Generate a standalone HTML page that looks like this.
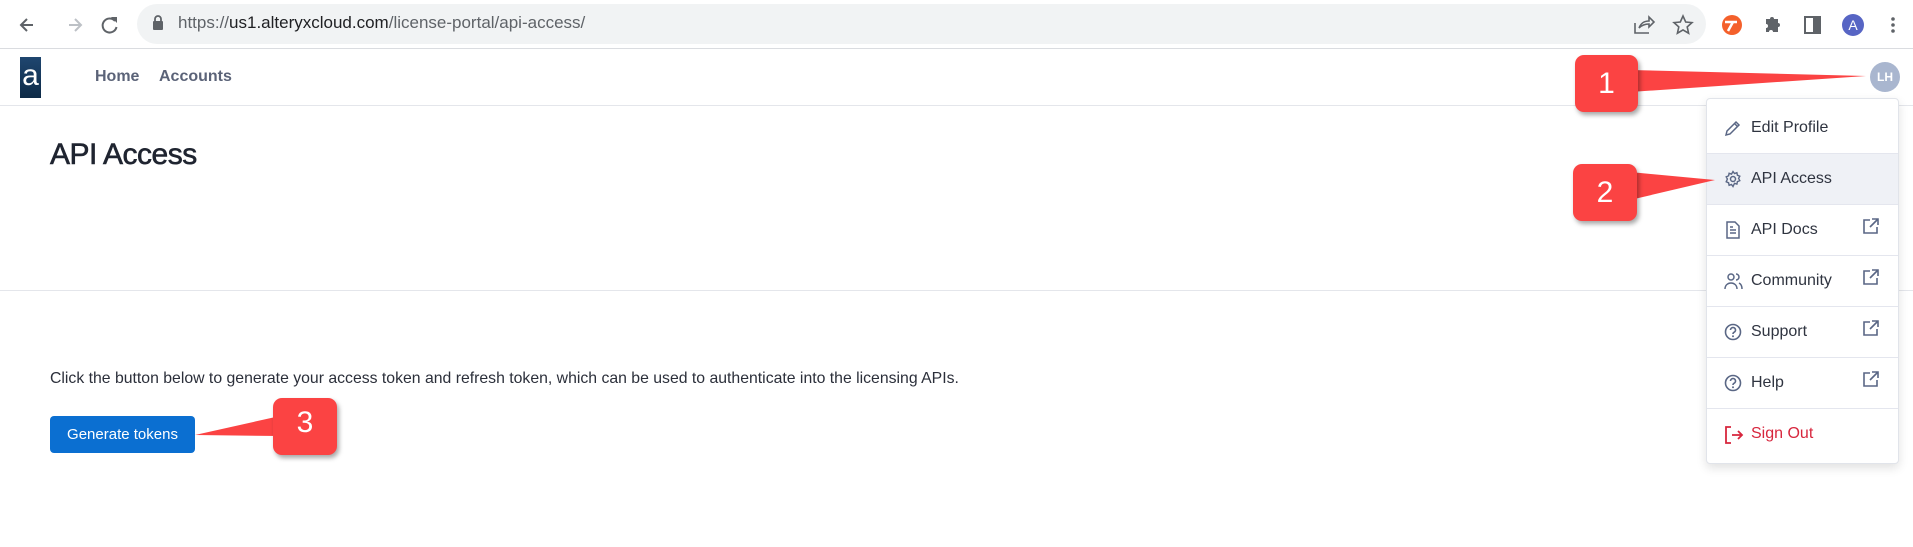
<!DOCTYPE html>
<html><head><meta charset="utf-8"><style>
*{margin:0;padding:0;box-sizing:border-box}
body{width:1913px;height:547px;overflow:hidden;background:#fff;font-family:"Liberation Sans",sans-serif;position:relative;color:#2b2f3a}
.a{position:absolute}
.chrome{left:0;top:0;width:1913px;height:49px;background:#fff;border-bottom:1px solid #dadce0}
.addr{left:137px;top:4px;width:1569px;height:40px;border-radius:20px;background:#f1f3f4}
.url{left:178px;top:13px;font-size:17px;color:#202124}
.url span{color:#5f6368}
.nav{left:0;top:105px;width:1913px;height:1px;background:#e4e6eb}
.menu{left:1706px;top:98px;width:193px;height:366px;background:#fff;border:1px solid #e1e4ea;border-radius:4px;box-shadow:0 4px 10px rgba(0,0,0,.12)}
.it{position:absolute;left:0;width:191px;height:51px;border-bottom:1px solid #e4e6ee;font-size:16px;color:#2f3440}
.it .t{position:absolute;left:44px;top:16px}
.it svg.i{position:absolute;left:17px;top:16px}
.it svg.e{position:absolute;left:155px;top:12px}
.call{position:absolute;background:#fb4343;border-radius:9px;color:#fff;font-size:30px;text-align:center;box-shadow:2px 3px 5px rgba(0,0,0,.35)}
</style></head><body>
<div class="a chrome"></div>
<svg class="a" style="left:16px;top:14px" width="110" height="22" viewBox="0 0 110 22"><path d="M17 11H5M11 5l-6 6 6 6" stroke="#5f6368" stroke-width="2" fill="none"/><path d="M53 11H65M59 5l6 6-6 6" stroke="#bdc1c6" stroke-width="2" fill="none"/><path d="M99 7a7 7 0 1 0 1.5 6" stroke="#5f6368" stroke-width="2" fill="none"/><path d="M95 3h6v6z" fill="#5f6368"/></svg>
<div class="a addr"></div>
<svg class="a" style="left:152px;top:15px" width="12" height="16"><rect x="1" y="6" width="10" height="9" rx="1" fill="#5f6368"/><path d="M3 7V4a3 3 0 0 1 6 0v3" stroke="#5f6368" stroke-width="1.8" fill="none"/></svg>
<div class="a url"><span>https://</span>us1.alteryxcloud.com<span>/license-portal/api-access/</span></div>
<svg class="a" style="left:1633px;top:14px" width="270" height="22" viewBox="0 0 270 22">
<path d="M2 9v10h14M6 14c2-5 5-7 10-7V3l5 5-5 5V10c-4 0-7 1-10 4" stroke="#5f6368" stroke-width="1.6" fill="none"/>
<path d="M50 2l2.7 6 6.3.6-4.8 4.3 1.4 6.3-5.6-3.3-5.6 3.3 1.4-6.3-4.8-4.3 6.3-.6z" stroke="#5f6368" stroke-width="1.6" fill="none"/>
<circle cx="99" cy="11" r="10" fill="#f4602b"/><path d="M92 8h12M100 8l-5 9" stroke="#fff" stroke-width="2.5" fill="none"/>
<path d="M133 5h4a2 2 0 0 1 4 0h4v4a2 2 0 0 1 0 4v5h-5a2 2 0 0 0-4 0h-3v-4a2 2 0 0 0 0-4z" fill="#5f6368"/>
<rect x="172" y="3" width="15" height="16" stroke="#5f6368" stroke-width="2" fill="none"/><rect x="180" y="3" width="7" height="16" fill="#5f6368"/>
<circle cx="220" cy="11" r="11" fill="#5765c4"/><text x="220" y="16" font-size="14" fill="#fff" text-anchor="middle" font-family="Liberation Sans">A</text>
<circle cx="260" cy="5" r="1.8" fill="#5f6368"/><circle cx="260" cy="11" r="1.8" fill="#5f6368"/><circle cx="260" cy="17" r="1.8" fill="#5f6368"/>
</svg>
<div class="a" style="left:20px;top:57px;width:21px;height:41px;background:linear-gradient(#1f4670,#0d2a47)"><div style="color:#fff;font-size:30px;line-height:38px;text-align:center;font-family:'Liberation Sans',sans-serif">a</div></div>
<div class="a" style="left:95px;top:68px;font-size:16px;color:#5b6378;font-weight:bold">Home</div>
<div class="a" style="left:159px;top:68px;font-size:16px;color:#5b6378;font-weight:bold">Accounts</div>
<div class="a nav"></div>
<div class="a" style="left:50px;top:138px;font-size:30px;color:#1f2430;-webkit-text-stroke:0.6px #1f2430;letter-spacing:-0.5px">API Access</div>
<div class="a" style="left:0;top:290px;width:1913px;height:1px;background:#e4e6eb"></div>
<div class="a" style="left:50px;top:370px;font-size:15.8px;color:#2b2f3a">Click the button below to generate your access token and refresh token, which can be used to authenticate into the licensing APIs.</div>
<div class="a" style="left:50px;top:416px;width:145px;height:37px;background:#0b6fd1;border-radius:4px;color:#fff;font-size:15px;text-align:center;line-height:37px">Generate tokens</div>
<div class="a" style="left:1870px;top:62px;width:30px;height:30px;border-radius:50%;background:#a9b6cf;color:#fff;font-size:12px;font-weight:bold;text-align:center;line-height:30px">LH</div>
<div class="a menu"><div style="position:absolute;left:0;top:4px;width:191px">
<div class="it" style="top:0"><svg class="i" width="18" height="18" viewBox="0 0 18 18"><path d="M2 16l1-4L12 3l3 3-9 9z M10.5 4.5l3 3" stroke="#5a6785" stroke-width="1.5" fill="none"/></svg><span class="t">Edit Profile</span></div>
<div class="it" style="top:51px;background:#eff1f6"><svg class="i" width="18" height="18" viewBox="0 0 18 18"><circle cx="9" cy="9" r="2.5" stroke="#5a6785" stroke-width="1.5" fill="none"/><path d="M9 1.5l1.5 2 2.4-.8.5 2.5 2.4 1-1.2 2.2 1.2 2.2-2.4 1-.5 2.5-2.4-.8L9 16.5l-1.5-2-2.4.8-.5-2.5-2.4-1L3.4 9 2.2 6.8l2.4-1 .5-2.5 2.4.8z" stroke="#5a6785" stroke-width="1.4" fill="none"/></svg><span class="t">API Access</span></div>
<div class="it" style="top:102px"><svg class="i" width="18" height="18" viewBox="0 0 18 18"><path d="M3 1h8l4 4v12H3z M6 9h6M6 12h6M6 6h3" stroke="#5a6785" stroke-width="1.5" fill="none"/></svg><span class="t">API Docs</span><svg class="e" width="18" height="18" viewBox="0 0 18 18"><path d="M8 3H2v13h13v-6M10 2h6v6M16 2L8 10" stroke="#5a6785" stroke-width="1.6" fill="none"/></svg></div>
<div class="it" style="top:153px"><svg class="i" width="20" height="18" viewBox="0 0 20 18"><circle cx="7" cy="5" r="3" stroke="#5a6785" stroke-width="1.5" fill="none"/><path d="M1 17c0-4 3-6 6-6s6 2 6 6M12 2a3 3 0 0 1 0 6M15 11c2 1 3 3 3 6" stroke="#5a6785" stroke-width="1.5" fill="none"/></svg><span class="t">Community</span><svg class="e" width="18" height="18" viewBox="0 0 18 18"><path d="M8 3H2v13h13v-6M10 2h6v6M16 2L8 10" stroke="#5a6785" stroke-width="1.6" fill="none"/></svg></div>
<div class="it" style="top:204px"><svg class="i" width="18" height="18" viewBox="0 0 18 18"><circle cx="9" cy="9" r="7.5" stroke="#5a6785" stroke-width="1.6" fill="none"/><path d="M6.5 7a2.5 2.5 0 1 1 3.5 2.3c-.8.4-1 .9-1 1.7" stroke="#5a6785" stroke-width="1.6" fill="none"/><circle cx="9" cy="13.3" r="1" fill="#5a6785"/></svg><span class="t">Support</span><svg class="e" width="18" height="18" viewBox="0 0 18 18"><path d="M8 3H2v13h13v-6M10 2h6v6M16 2L8 10" stroke="#5a6785" stroke-width="1.6" fill="none"/></svg></div>
<div class="it" style="top:255px"><svg class="i" width="18" height="18" viewBox="0 0 18 18"><circle cx="9" cy="9" r="7.5" stroke="#5a6785" stroke-width="1.6" fill="none"/><path d="M6.5 7a2.5 2.5 0 1 1 3.5 2.3c-.8.4-1 .9-1 1.7" stroke="#5a6785" stroke-width="1.6" fill="none"/><circle cx="9" cy="13.3" r="1" fill="#5a6785"/></svg><span class="t">Help</span><svg class="e" width="18" height="18" viewBox="0 0 18 18"><path d="M8 3H2v13h13v-6M10 2h6v6M16 2L8 10" stroke="#5a6785" stroke-width="1.6" fill="none"/></svg></div>
<div class="it" style="top:306px;border:none;color:#d7263d"><svg class="i" width="20" height="20" viewBox="0 0 20 20"><path d="M7 2H2v16h5M8 10h10M14 6l4 4-4 4" stroke="#d7263d" stroke-width="1.8" fill="none"/></svg><span class="t">Sign Out</span></div>
</div></div>
<svg class="a" style="left:0;top:0" width="1913" height="547">
<polygon points="1630,70 1866,76 1630,92" fill="#fb4343"/>
<polygon points="1630,172 1715,180 1630,200" fill="#fb4343"/>
<polygon points="280,416 195,435 280,436" fill="#fb4343"/>
</svg>
<div class="call" style="left:1575px;top:55px;width:63px;height:57px;line-height:57px">1</div>
<div class="call" style="left:1573px;top:164px;width:64px;height:57px;line-height:57px">2</div>
<div class="call" style="left:273px;top:398px;width:64px;height:57px;line-height:50px">3</div>
</body></html>
